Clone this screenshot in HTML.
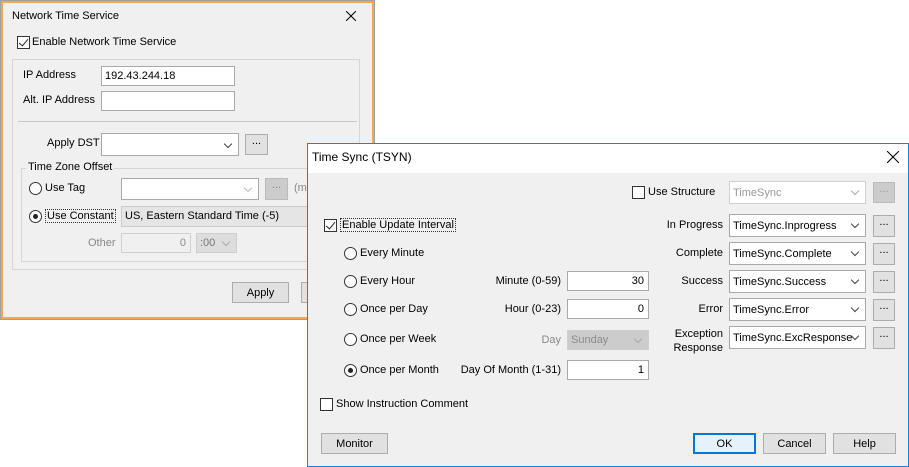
<!DOCTYPE html><html><head><style>
*{box-sizing:border-box;margin:0;padding:0}
body{width:909px;height:467px;background:#fff;position:relative;overflow:hidden;font-family:"Liberation Sans",sans-serif;font-size:11px;color:#000}
.a{position:absolute;white-space:nowrap}
.in{position:absolute;background:#fff;border:1px solid #a9a9a9}
.dis{background:#f0f0f0;border-color:#cfcfcf;color:#8a8a8a}
.btn{position:absolute;background:#e1e1e1;border:1px solid #adadad;text-align:center}
.cb{position:absolute;width:13px;height:13px;border:1px solid #333;background:#fff}
.rd{position:absolute;width:13px;height:13px;border:1px solid #333;border-radius:50%;background:#fff}
.dot::after{content:"";position:absolute;left:3px;top:3px;width:5px;height:5px;border-radius:50%;background:#222}
.chk::after{content:"";position:absolute;left:3px;top:0px;width:4px;height:8px;border:solid #222;border-width:0 1.5px 1.5px 0;transform:rotate(40deg)}
.arr{position:absolute;right:7px;top:5px;width:6px;height:6px;border:solid #444;border-width:0 1px 1px 0;transform:rotate(45deg)}
.dis .arr{border-color:#aaa}
.gb{position:absolute;border:1px solid #d5d5d5}
</style></head><body>
<div class="a" style="left:0;top:0;width:375px;height:320px;background:#f0f0f0;border:3px solid #f5a94e"></div>
<div class="a" style="left:0;top:0;width:375px;height:320px;border:1px solid #a0a0a0"></div>
<div class="a" style="left:12px;top:10px">Network Time Service</div>
<svg class="a" style="left:346px;top:11px" width="10" height="10"><path d="M0 0L10 10M10 0L0 10" stroke="#000" stroke-width="1"/></svg>
<div class="cb chk" style="left:17px;top:36px"></div>
<div class="a" style="left:32px;top:36px">Enable Network Time Service</div>
<div class="gb" style="left:12px;top:59px;width:348px;height:211px"></div>
<div class="a" style="left:23px;top:69px">IP Address</div>
<div class="in" style="left:101px;top:66px;width:134px;height:20px;padding:3px 3px">192.43.244.18</div>
<div class="a" style="left:23px;top:94px">Alt. IP Address</div>
<div class="in" style="left:101px;top:91px;width:134px;height:20px"></div>
<div class="a" style="left:18px;top:121px;width:339px;border-top:1px solid #c8c8c8"></div>
<div class="a" style="left:47px;top:137px">Apply DST</div>
<div class="in" style="left:101px;top:133px;width:138px;height:23px"><div class="arr" style="top:7px"></div></div>
<div class="btn" style="left:245px;top:134px;width:23px;height:21px">...</div>
<div class="gb" style="left:21px;top:168px;width:300px;height:94px"></div>
<div class="a" style="left:26px;top:161px;background:#f0f0f0;padding:0 2px">Time Zone Offset</div>
<div class="rd" style="left:29px;top:182px"></div>
<div class="a" style="left:45px;top:182px">Use Tag</div>
<div class="in" style="left:121px;top:178px;width:138px;height:22px"><div class="arr" style="top:6px;border-color:#bbb"></div></div>
<div class="btn" style="left:265px;top:178px;width:23px;height:22px;background:#ccc;border-color:#bbb;color:#888">...</div>
<div class="a" style="left:294px;top:182px;color:#888">(mi</div>
<div class="rd dot" style="left:29px;top:210px"></div>
<div class="a" style="left:45px;top:209px;border:1px dotted #333;padding:0 1px">Use Constant</div>
<div class="in" style="left:121px;top:206px;width:190px;height:21px;background:#e5e5e5;border-color:#ccc;padding:3px 3px">US, Eastern Standard Time (-5)</div>
<div class="a" style="left:88px;top:237px;color:#888">Other</div>
<div class="in dis" style="left:121px;top:233px;width:70px;height:20px;text-align:right;padding:3px 4px">0</div>
<div class="in dis" style="left:196px;top:233px;width:41px;height:20px;background:#ddd;padding:3px 3px;color:#777">:00<div class="arr"></div></div>
<div class="btn" style="left:232px;top:282px;width:57px;height:21px;padding-top:4px">Apply</div>
<div class="btn" style="left:301px;top:282px;width:20px;height:21px"></div>
<div class="a" style="left:307px;top:143px;width:602px;height:324px;background:#f0f0f0;border:1px solid #1883d7"></div>
<div class="a" style="left:308px;top:144px;width:600px;height:29px;background:#fff"></div>
<div class="a" style="left:312px;top:150px;font-size:12px">Time Sync (TSYN)</div>
<svg class="a" style="left:887px;top:151px" width="12" height="12"><path d="M0 0L12 12M12 0L0 12" stroke="#000" stroke-width="1"/></svg>
<div class="cb" style="left:632px;top:186px"></div>
<div class="a" style="left:648px;top:186px">Use Structure</div>
<div class="in dis" style="left:729px;top:181px;width:137px;height:23px;background:#fff;padding:5px 3px;color:#999">TimeSync<div class="arr" style="top:6px"></div></div>
<div class="btn" style="left:873px;top:182px;width:22px;height:21px;background:#ccc;border-color:#bbb;color:#999">...</div>
<div class="cb chk" style="left:324px;top:219px"></div>
<div class="a" style="left:340px;top:218px;border:1px dotted #333;padding:0 1px">Enable Update Interval</div>
<div class="rd" style="left:344px;top:247px"></div><div class="a" style="left:360px;top:247px">Every Minute</div>
<div class="rd" style="left:344px;top:275px"></div><div class="a" style="left:360px;top:275px">Every Hour</div>
<div class="rd" style="left:344px;top:303px"></div><div class="a" style="left:360px;top:303px">Once per Day</div>
<div class="rd" style="left:344px;top:333px"></div><div class="a" style="left:360px;top:333px">Once per Week</div>
<div class="rd dot" style="left:344px;top:364px"></div><div class="a" style="left:360px;top:364px">Once per Month</div>
<div class="a" style="right:348px;top:275px">Minute (0-59)</div>
<div class="in" style="left:567px;top:271px;width:82px;height:20px;text-align:right;padding:3px 4px">30</div>
<div class="a" style="right:348px;top:303px">Hour (0-23)</div>
<div class="in" style="left:567px;top:299px;width:82px;height:20px;text-align:right;padding:3px 4px">0</div>
<div class="a" style="right:348px;top:334px;color:#888">Day</div>
<div class="in dis" style="left:567px;top:330px;width:82px;height:20px;background:#ccc;padding:3px 3px">Sunday<div class="arr"></div></div>
<div class="a" style="right:348px;top:364px">Day Of Month (1-31)</div>
<div class="in" style="left:567px;top:360px;width:82px;height:20px;text-align:right;padding:3px 4px">1</div>
<div class="a" style="right:186px;top:219px">In Progress</div>
<div class="a" style="right:186px;top:247px">Complete</div>
<div class="a" style="right:186px;top:275px">Success</div>
<div class="a" style="right:186px;top:303px">Error</div>
<div class="a" style="right:186px;top:327px;text-align:right;line-height:14px">Exception<br>Response</div>
<div class="in" style="left:729px;top:214px;width:137px;height:23px;padding:5px 3px">TimeSync.Inprogress<div class="arr" style="top:6px"></div></div>
<div class="in" style="left:729px;top:242px;width:137px;height:23px;padding:5px 3px">TimeSync.Complete<div class="arr" style="top:6px"></div></div>
<div class="in" style="left:729px;top:270px;width:137px;height:23px;padding:5px 3px">TimeSync.Success<div class="arr" style="top:6px"></div></div>
<div class="in" style="left:729px;top:298px;width:137px;height:23px;padding:5px 3px">TimeSync.Error<div class="arr" style="top:6px"></div></div>
<div class="in" style="left:729px;top:326px;width:137px;height:23px;padding:5px 3px">TimeSync.ExcResponse<div class="arr" style="top:6px"></div></div>
<div class="btn" style="left:873px;top:215px;width:22px;height:22px">...</div>
<div class="btn" style="left:873px;top:243px;width:22px;height:22px">...</div>
<div class="btn" style="left:873px;top:271px;width:22px;height:22px">...</div>
<div class="btn" style="left:873px;top:299px;width:22px;height:22px">...</div>
<div class="btn" style="left:873px;top:327px;width:22px;height:22px">...</div>
<div class="cb" style="left:320px;top:398px"></div>
<div class="a" style="left:336px;top:398px">Show Instruction Comment</div>
<div class="btn" style="left:321px;top:433px;width:67px;height:21px;padding-top:4px">Monitor</div>
<div class="btn" style="left:693px;top:433px;width:63px;height:21px;padding-top:3px;border:2px solid #0078d7;background:#e5f1fb">OK</div>
<div class="btn" style="left:763px;top:433px;width:63px;height:21px;padding-top:4px">Cancel</div>
<div class="btn" style="left:833px;top:433px;width:63px;height:21px;padding-top:4px">Help</div>
</body></html>
